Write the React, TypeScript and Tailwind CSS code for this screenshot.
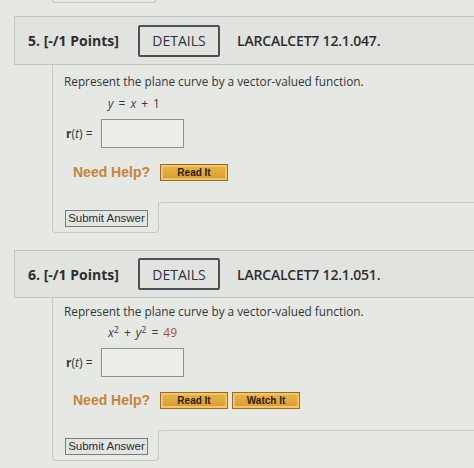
import React from "react";

const sans = { fontFamily: '"Open Sans", "Liberation Sans", sans-serif' };
const arial = { fontFamily: '"Liberation Sans", Arial, sans-serif' };

function GoldButton({ label, w }: { label: string; w: string }) {
  return (
    <div
      className={`${w} h-[17px] flex items-center justify-center border border-[#a06a26] bg-[linear-gradient(#e9b54a,#d99a30)] shadow-[inset_0_0_0_2px_#f0c666]`}
    >
      <span className="text-[10px] font-bold text-[#2a2214] leading-none" style={arial}>
        {label}
      </span>
    </div>
  );
}

function Op({ c }: { c: string }) {
  return <span className="mx-[5px]">{c}</span>;
}

function Question({
  num,
  code,
  eq,
  watch,
  bodyH,
  first,
  t1,
  t2,
  t3,
  t4,
}: {
  num: string;
  code: string;
  eq: React.ReactNode;
  watch?: boolean;
  bodyH: string;
  first?: boolean;
  t1: string;
  t2: string;
  t3: string;
  t4: string;
}) {
  return (
    <div className="flex flex-col">
      {/* header */}
      <div
        className={`ml-[14px] ${first ? "h-[49px]" : "h-[48px]"} border-t border-b border-l border-[#c4c6c0] bg-[#e1e3de] flex items-center pl-[13px]`}
      >
        <span className="text-[14px] font-bold text-[#2e2e2e] w-[110px] whitespace-nowrap" style={sans}>
          {num}. [-/1 Points]
        </span>
        <div className="w-[82px] h-[32px] border-2 border-[#4b5058] rounded-[2px] flex items-center justify-center">
          <span className="text-[14px] text-[#2e3440]" style={sans}>
            DETAILS
          </span>
        </div>
        <span className="ml-[17px] text-[14px] font-semibold text-[#2e2e2e] tracking-[-0.2px]" style={sans}>
          {code}
        </span>
      </div>
      {/* body */}
      <div className={`ml-[52px] ${bodyH} border-l border-[#c8cac4] flex flex-col pl-[11px]`}>
        <div className={`${t1} text-[11.8px] text-[#33363b] leading-[16px]`} style={sans}>
          Represent the plane curve by a vector-valued function.
        </div>
        <div className={`${t2} ml-[44px] h-[18px] flex items-center text-[12px] text-[#3a3d42] whitespace-pre`} style={sans}>
          {eq}
        </div>
        <div className={`${t3} flex items-center`}>
          <span className="ml-[2px] w-[35px] text-[12px] text-[#33363b] whitespace-pre" style={sans}>
            <span className="font-bold">r</span>(<span className="italic">t</span>) =
          </span>
          <div className="w-[83px] h-[29px] border border-[#8d9090] bg-[#eceee9]" />
        </div>
        <div className={`${t4} flex items-center`}>
          <span className="ml-[9px] text-[14px] font-bold text-[#c8833a]" style={arial}>
            Need Help?
          </span>
          <div className="ml-[10px] flex gap-[4px]">
            <GoldButton label="Read It" w="w-[68px]" />
            {watch && <GoldButton label="Watch It" w="w-[68px]" />}
          </div>
        </div>
      </div>
      {/* submit row */}
      <div className="flex h-[31px]">
        <div className="ml-[52px] w-[107px] border-l border-r border-b border-[#c8cac4] rounded-b-[4px] pl-[12px] pt-[8px]">
          <div className="w-[83px] h-[17px] border border-[#7a7d80] bg-[#e3e5e1] flex items-center justify-center">
            <span className="text-[11.5px] text-[#2a2d31] leading-none" style={arial}>
              Submit Answer
            </span>
          </div>
        </div>
        <div className="flex-1 border-t border-[#c8cac4] rounded-tl-[3px]" />
      </div>
    </div>
  );
}

export default function App() {
  return (
    <div className="w-[474px] h-[468px] overflow-hidden bg-[#e6e8e3]">
      <div className="h-[16px]">
        <div className="ml-[52px] w-[104px] h-[3px] border-l border-r border-b border-[#c8cac4] rounded-b-[3px]" />
      </div>
      <Question
        num="5"
        code="LARCALCET7 12.1.047."
        bodyH="h-[137px]"
        first
        t1="mt-[8px]"
        t2="mt-[6px]"
        t3="mt-[6px]"
        t4="mt-[14px]"
        eq={
          <span>
            <span className="italic">y</span>
            <Op c="=" />
            <span className="italic">x</span>
            <Op c="+" />1
          </span>
        }
      />
      <div className="h-[17px]" />
      <Question
        num="6"
        code="LARCALCET7 12.1.051."
        bodyH="h-[132px]"
        watch
        t1="mt-[5px]"
        t2="mt-[5px]"
        t3="mt-[6px]"
        t4="mt-[13px]"
        eq={
          <span>
            <span className="italic">x</span>
            <sup className="text-[9px]">2</sup>
            <Op c="+" />
            <span className="italic">y</span>
            <sup className="text-[9px]">2</sup>
            <Op c="=" />
            <span className="text-[#b4473a]">49</span>
          </span>
        }
      />
    </div>
  );
}
